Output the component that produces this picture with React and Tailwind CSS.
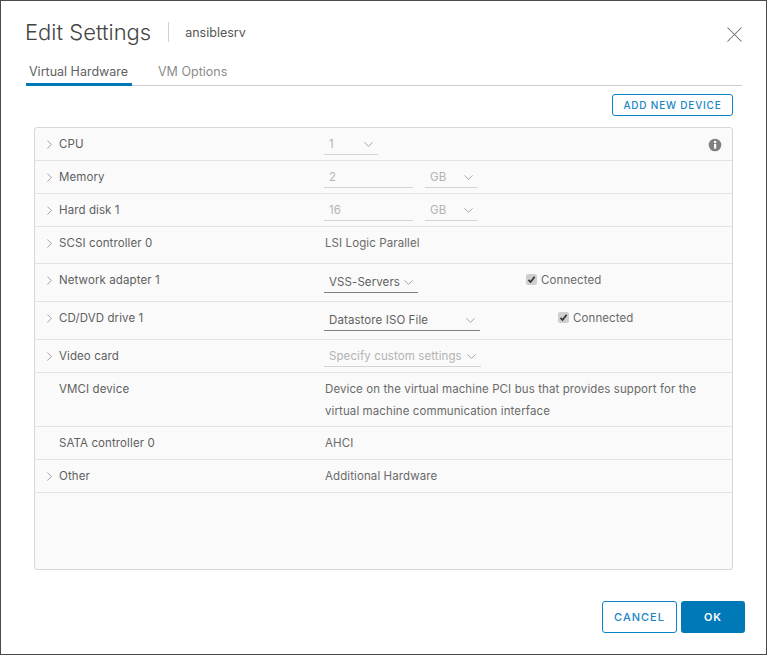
import { ChevronRight, ChevronDown, X } from 'lucide-react';

function Arrow() {
  return <ChevronRight size={15} strokeWidth={1.1} className="text-[#7d7d7d] shrink-0 -my-px" />;
}

function Select({ text, width, muted }) {
  return (
    <div className={`flex items-start justify-between h-[19px] border-b ${muted ? 'border-[#d4d4d4] text-[#b3b3b3]' : 'border-[#7f7f7f] text-[#5f5f5f]'} pl-[5px] pr-[2px] ${width}`}>
      <span>{text}</span>
      <ChevronDown size={15} strokeWidth={1.1} className="text-[#7d7d7d] shrink-0 mt-[1px]" />
    </div>
  );
}

function Input({ text, width }) {
  return <div className={`h-[19px] border-b border-[#d4d4d4] text-[#b3b3b3] pl-[5px] ${width}`}>{text}</div>;
}

function Connected({ left }) {
  return (
    <div className={`flex items-center gap-[4px] text-[#6a6a6a] ${left}`}>
      <span className="w-[11px] h-[11px] -mt-[2px] rounded-[2px] bg-[#cfcfcf] flex items-center justify-center">
        <svg width="9" height="9" viewBox="0 0 9 9"><path d="M1.5 4.8 L3.6 7 L7.6 1.8" fill="none" stroke="#333" strokeWidth="1.7" /></svg>
      </span>
      <span>Connected</span>
    </div>
  );
}

function Row({ label, arrow = true, height, top, children }) {
  return (
    <div className={`flex items-start border-b border-[#e3e3e3] ${height} ${top}`}>
      <div className="flex items-center w-[290px] shrink-0 text-[#5f5f5f]">
        <div className="w-[24px] pl-[7px] flex items-center">{arrow && <Arrow />}</div>
        <span>{label}</span>
      </div>
      <div className="flex-1 flex items-start text-[#6a6a6a]">{children}</div>
    </div>
  );
}

export default function App() {
  return (
    <div className="w-[767px] h-[655px] bg-[#4a4a4a] p-px font-['Inter','Liberation_Sans',sans-serif] text-[11.5px] leading-[16px] tracking-[0.1px]">
      <div className="h-full w-[765px] bg-white flex flex-col pl-[24px] pr-[33px]">
        {/* Header */}
        <div className="flex items-center h-[49px] mt-[6px] shrink-0">
          <h1 className="text-[22px] leading-[28px] font-light text-[#444] tracking-normal">Edit Settings</h1>
          <div className="w-px h-[20px] bg-[#d0d0d0] ml-[17px] mr-[16px]" />
          <span className="text-[12.5px] text-[#555] tracking-normal mt-[2px]">ansiblesrv</span>
          <X size={27} strokeWidth={0.9} className="text-[#6a6a6a] ml-auto -mr-[15px] mt-[5px]" />
        </div>

        {/* Tabs */}
        <div className="flex items-stretch h-[29px] border-b border-[#cccccc] shrink-0 mt-[1px] ml-px -mr-[9px] text-[12.5px] tracking-normal">
          <div className="w-[106px] pl-[3px] pt-[7px] h-[29px] border-b-[3px] border-[#0077b8] text-[#5f5f5f]">Virtual Hardware</div>
          <div className="ml-[26px] pt-[7px] text-[#8c8c8c]">VM Options</div>
        </div>

        {/* Add device */}
        <div className="flex justify-end mt-[8px] mb-[11px] shrink-0">
          <button className="w-[121px] h-[22px] rounded-[3px] border border-[#0a84c6] text-[#1a86c4] text-[10px] font-medium tracking-[0.8px] flex items-center justify-center">ADD NEW DEVICE</button>
        </div>

        {/* Hardware list */}
        <div className="ml-[9px] h-[443px] shrink-0 rounded-[3px] border border-[#d7d7d7] bg-[#fafafa]">
          <Row label="CPU" height="h-[33px]" top="pt-[8px]">
            <div className="flex justify-between w-full pr-[10px]">
              <Select text="1" width="w-[54px] -ml-px" muted />
              <svg width="14" height="14" viewBox="0 0 14 14" className="mt-[2px]"><circle cx="7" cy="7" r="6.3" fill="#808080" /><rect x="6" y="6" width="2.2" height="4.6" fill="#fff" /><circle cx="7.1" cy="4" r="1.3" fill="#fff" /></svg>
            </div>
          </Row>
          <Row label="Memory" height="h-[33px]" top="pt-[8px]">
            <div className="flex gap-[12px] -ml-px">
              <Input text="2" width="w-[89px]" />
              <Select text="GB" width="w-[53px]" muted />
            </div>
          </Row>
          <Row label="Hard disk 1" height="h-[33px]" top="pt-[8px]">
            <div className="flex gap-[12px] -ml-px">
              <Input text="16" width="w-[89px]" />
              <Select text="GB" width="w-[53px]" muted />
            </div>
          </Row>
          <Row label="SCSI controller 0" height="h-[37px]" top="pt-[8px]">
            <span>LSI Logic Parallel</span>
          </Row>
          <Row label="Network adapter 1" height="h-[38px]" top="pt-[8px]">
            <Select text="VSS-Servers" width="w-[94px] -ml-px mt-[2px]" />
            <Connected left="ml-[108px]" />
          </Row>
          <Row label="CD/DVD drive 1" height="h-[38px]" top="pt-[8px]">
            <Select text="Datastore ISO File" width="w-[156px] -ml-px mt-[2px]" />
            <Connected left="ml-[78px]" />
          </Row>
          <Row label="Video card" height="h-[33px]" top="pt-[8px]">
            <Select text="Specify custom settings" width="w-[157px] -ml-px whitespace-nowrap" muted />
          </Row>
          <Row label="VMCI device" arrow={false} height="h-[54px]" top="pt-[8px]">
            <p className="leading-[22px] -mt-[3px]">Device on the virtual machine PCI bus that provides support for the<br />virtual machine communication interface</p>
          </Row>
          <Row label="SATA controller 0" arrow={false} height="h-[33px]" top="pt-[8px]">
            <span>AHCI</span>
          </Row>
          <Row label="Other" height="h-[33px]" top="pt-[8px]">
            <span>Additional Hardware</span>
          </Row>
        </div>

        {/* Footer */}
        <div className="flex justify-end gap-[4px] mt-[31px] -mr-[12px]">
          <button className="w-[75px] h-[32px] rounded-[3px] border border-[#0a84c6] text-[#1a86c4] text-[11px] font-medium tracking-[1px]">CANCEL</button>
          <button className="w-[64px] h-[32px] rounded-[3px] bg-[#0079b8] text-white text-[11px] font-semibold tracking-[1px]">OK</button>
        </div>
      </div>
    </div>
  );
}
